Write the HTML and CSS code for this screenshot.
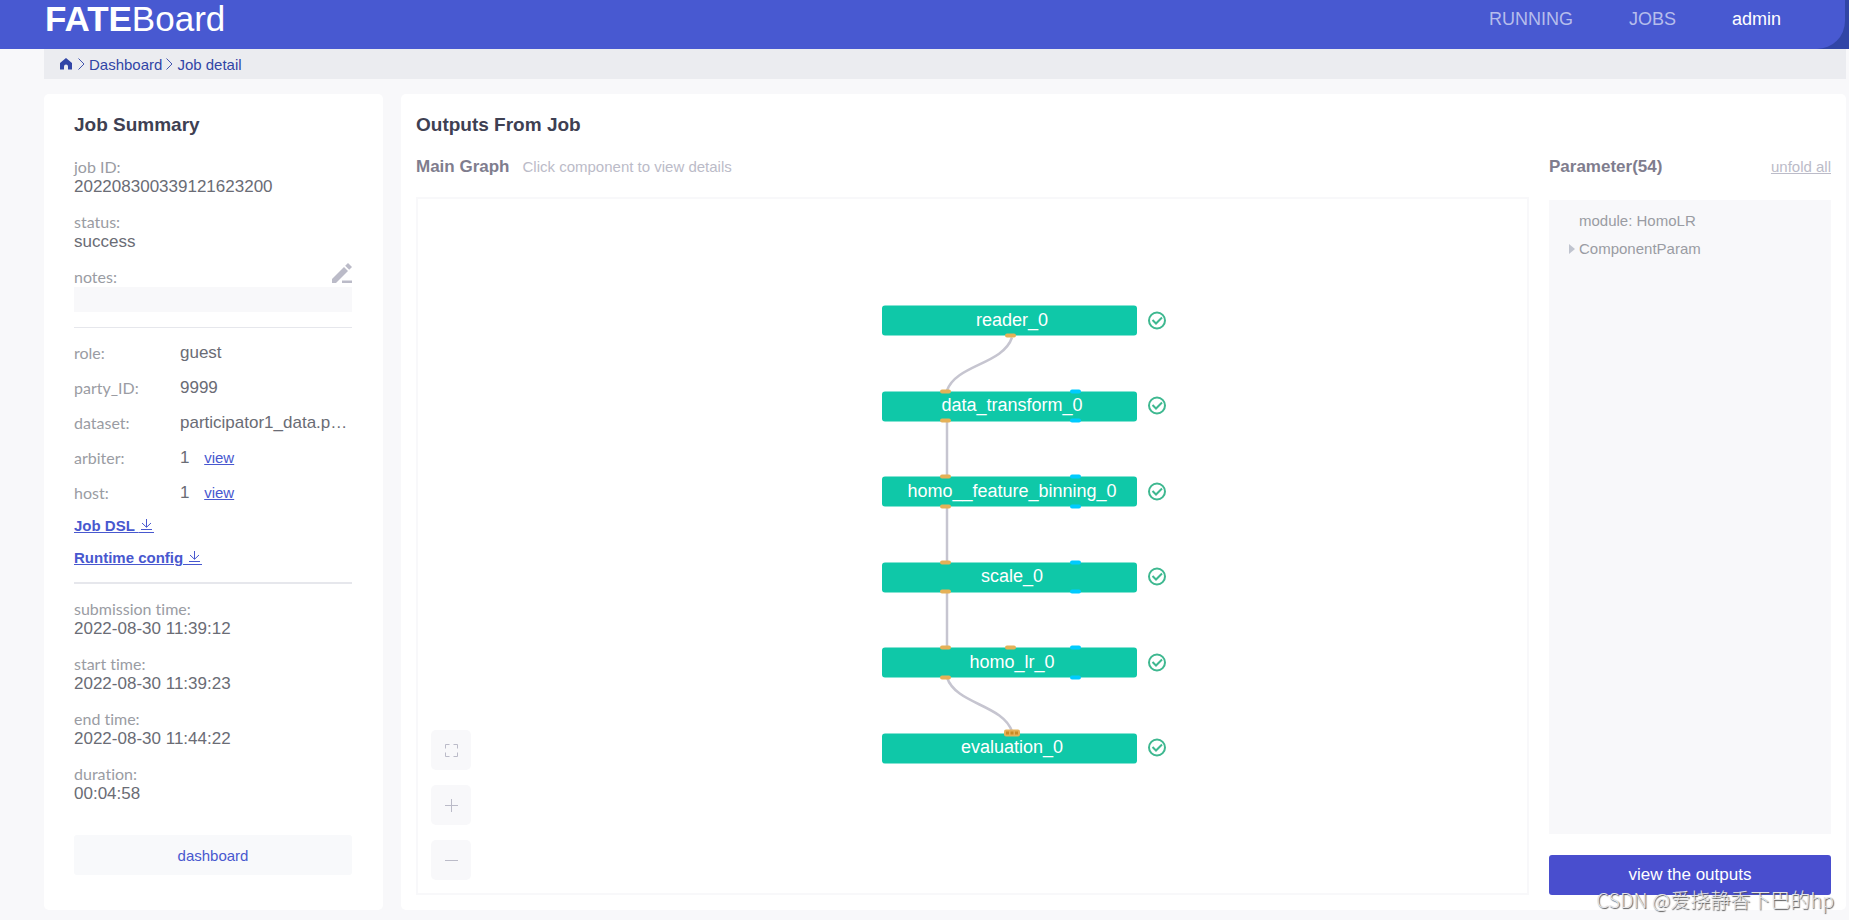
FILE: index.html
```
<!doctype html>
<html lang="en">
  <head>
    <meta charset="utf-8" />
    <title>FATEBoard</title>
    <meta name="viewport" content="width=device-width, initial-scale=1.0" />
    <link rel="stylesheet" href="styles.css" />
  </head>
  <body>
    <header class="header">
      <div class="header-inner">
        <div class="logo"><b>FATE</b>Board</div>
        <nav class="nav">
          <a href="#running">RUNNING</a>
          <a href="#jobs">JOBS</a>
          <a href="#admin" class="user">admin</a>
        </nav>
      </div>
    </header>

    <div class="page">
      <nav class="breadcrumb">
        <a href="#home" class="home" aria-label="Home">
          <svg width="12" height="12" viewBox="0 0 12 12">
            <path d="M6 0 L12 5 V11.5 H8 V8.5 A2 2 0 0 0 4 8.5 V11.5 H0 V5 Z" fill="#3145a6" />
          </svg>
        </a>
        <svg class="sep" width="7" height="12" viewBox="0 0 7 12">
          <path d="M0.5 0.5 L6 6 L0.5 11.5" fill="none" stroke="#3145a6" stroke-width="0.9" />
        </svg>
        <a href="#dashboard">Dashboard</a>
        <svg class="sep" width="7" height="12" viewBox="0 0 7 12">
          <path d="M0.5 0.5 L6 6 L0.5 11.5" fill="none" stroke="#3145a6" stroke-width="0.9" />
        </svg>
        <a href="#detail">Job detail</a>
      </nav>

      <div class="content">
        <aside class="panel summary">
          <h2>Job Summary</h2>
          <dl class="field">
            <dt>job ID:</dt>
            <dd>202208300339121623200</dd>
          </dl>
          <dl class="field">
            <dt>status:</dt>
            <dd>success</dd>
          </dl>
          <div class="notes-head">
            <label for="notes">notes:</label>
            <button class="edit" aria-label="Edit notes">
              <svg width="20" height="20" viewBox="0 0 20 20" fill="#bbbbc8">
                <path d="M0 20 V16 L12 4 L16 8 L4 20 Z" />
                <path d="M13.2 2.8 L16 0 L20 4 L17.2 6.8 Z" />
                <path d="M10 17.5 H20 V20 H10 Z" />
              </svg>
            </button>
          </div>
          <input class="notes" id="notes" type="text" readonly />

          <hr />

          <dl class="row">
            <dt>role:</dt>
            <dd>guest</dd>
          </dl>
          <dl class="row">
            <dt>party_ID:</dt>
            <dd>9999</dd>
          </dl>
          <dl class="row">
            <dt>dataset:</dt>
            <dd>participator1_data.p…</dd>
          </dl>
          <dl class="row">
            <dt>arbiter:</dt>
            <dd>1 <a href="#arbiter">view</a></dd>
          </dl>
          <dl class="row">
            <dt>host:</dt>
            <dd>1 <a href="#host">view</a></dd>
          </dl>
          <a class="download" href="#dsl">Job DSL
            <svg width="15" height="14" viewBox="0 0 15 14" fill="none" stroke="#4858cf">
              <path d="M7.5 0 V8 M3 4 L7.5 8.3 L12 4 M2 10.5 H13 M0 13.5 H15" />
            </svg></a>
          <a class="download" href="#config">Runtime config
            <svg width="15" height="14" viewBox="0 0 15 14" fill="none" stroke="#4858cf">
              <path d="M7.5 0 V8 M3 4 L7.5 8.3 L12 4 M2 10.5 H13 M0 13.5 H15" />
            </svg></a>

          <hr class="thick" />

          <dl class="field">
            <dt>submission time:</dt>
            <dd>2022-08-30 11:39:12</dd>
          </dl>
          <dl class="field">
            <dt>start time:</dt>
            <dd>2022-08-30 11:39:23</dd>
          </dl>
          <dl class="field">
            <dt>end time:</dt>
            <dd>2022-08-30 11:44:22</dd>
          </dl>
          <dl class="field">
            <dt>duration:</dt>
            <dd>00:04:58</dd>
          </dl>
          <button class="btn-dashboard">dashboard</button>
        </aside>

        <main class="panel outputs">
          <h2>Outputs From Job</h2>
          <div class="columns">
            <section class="graph-col">
              <div class="sub">
                <h3>Main Graph</h3>
                <span class="hint">Click component to view details</span>
              </div>
              <div class="graph">
                <svg class="dag" viewBox="0 0 1109 693">
                  <defs>
                    <rect id="box" width="255" height="30" rx="3" />
                    <rect id="port" width="11" height="4" rx="2" />
                    <g id="ok" fill="none" stroke="#3eb890" stroke-width="2">
                      <circle r="8" />
                      <path d="M-4.5 -0.5 L-1 3 L5 -3" />
                    </g>
                  </defs>

                  <g class="links">
                    <path d="M594 138 C585 165 538 165 529 191" />
                    <path d="M529 222 V277" />
                    <path d="M529 307 V363" />
                    <path d="M529 393 V448" />
                    <path d="M529 478 C538 505 585 505 594 532" />
                  </g>

                  <g class="boxes">
                    <use href="#box" x="464" y="106" />
                    <use href="#box" x="464" y="192" />
                    <use href="#box" x="464" y="277" />
                    <use href="#box" x="464" y="363" />
                    <use href="#box" x="464" y="448" />
                    <use href="#box" x="464" y="534" />
                  </g>

                  <g class="names">
                    <text x="594" y="126">reader_0</text>
                    <text x="594" y="211">data_transform_0</text>
                    <text x="594" y="297">homo__feature_binning_0</text>
                    <text x="594" y="382">scale_0</text>
                    <text x="594" y="468">homo_lr_0</text>
                    <text x="594" y="553">evaluation_0</text>
                  </g>

                  <g class="ports-data">
                    <use href="#port" x="587" y="134" />
                    <use href="#port" x="522" y="190" />
                    <use href="#port" x="522" y="219" />
                    <use href="#port" x="522" y="275" />
                    <use href="#port" x="522" y="305" />
                    <use href="#port" x="522" y="361" />
                    <use href="#port" x="522" y="390" />
                    <use href="#port" x="522" y="446" />
                    <use href="#port" x="587" y="446" />
                    <use href="#port" x="522" y="476" />
                    <rect x="586" y="530" width="16" height="7" rx="2" />
                  </g>
                  <path d="M588 533.5 h3 m1.5 0 h3 m1.5 0 h3" stroke="#c98a25" stroke-width="3" />

                  <g class="ports-model">
                    <use href="#port" x="652" y="190" />
                    <use href="#port" x="652" y="219" />
                    <use href="#port" x="652" y="275" />
                    <use href="#port" x="652" y="305" />
                    <use href="#port" x="652" y="361" />
                    <use href="#port" x="652" y="390" />
                    <use href="#port" x="652" y="446" />
                    <use href="#port" x="652" y="476" />
                  </g>

                  <use href="#ok" x="739" y="121" />
                  <use href="#ok" x="739" y="206" />
                  <use href="#ok" x="739" y="292" />
                  <use href="#ok" x="739" y="377" />
                  <use href="#ok" x="739" y="463" />
                  <use href="#ok" x="739" y="548" />
                </svg>
                <div class="tools">
                  <button aria-label="Fit to screen">
                    <svg width="13" height="13" viewBox="0 0 13 13">
                      <path d="M0.5 4.5 V0.5 H4.5 M8.5 0.5 H12.5 V4.5 M12.5 8.5 V12.5 H8.5 M4.5 12.5 H0.5 V8.5" />
                    </svg>
                  </button>
                  <button aria-label="Zoom in">
                    <svg width="13" height="13" viewBox="0 0 13 13">
                      <path d="M6.5 0 V13 M0 6.5 H13" />
                    </svg>
                  </button>
                  <button aria-label="Zoom out">
                    <svg width="13" height="13" viewBox="0 0 13 13">
                      <path d="M0 6.5 H13" />
                    </svg>
                  </button>
                </div>
              </div>
            </section>

            <section class="param-col">
              <div class="sub">
                <h3>Parameter(54)</h3>
                <a href="#unfold" class="unfold">unfold all</a>
              </div>
              <ul class="params">
                <li>module: HomoLR</li>
                <li class="folded">ComponentParam</li>
              </ul>
              <button class="btn-outputs">view the outputs</button>
            </section>
          </div>
        </main>
      </div>
    </div>

    <div class="watermark">CSDN @爱挠静香下巴的hp</div>
  </body>
</html>
```
FILE: styles.css
```
*,
*::before {
  box-sizing: border-box;
}
body {
  margin: 0;
  min-height: 100vh;
  display: flex;
  flex-direction: column;
  background: #f8f8fa;
  color: #6a6c75;
  font-family: "Liberation Sans", Arial, sans-serif;
  font-size: 17px;
  line-height: 19px;
}
h2,
h3,
dl,
dd,
ul {
  margin: 0;
  padding: 0;
}
button {
  border: none;
  padding: 0;
  font-family: inherit;
  cursor: pointer;
}

/* header */
.header {
  background: #3145a6;
}
.header-inner {
  display: flex;
  justify-content: space-between;
  align-items: flex-start;
  height: 49px;
  margin-right: 4px;
  padding: 0 64px 0 45px;
  background: #4859d1;
  border-radius: 0 0 28px 0;
}
.logo {
  color: #fff;
  font-size: 35px;
  line-height: 38px;
}
.nav {
  display: flex;
  gap: 56px;
  padding-top: 10px;
}
.nav a {
  color: #b6bdec;
  font-size: 18px;
  text-decoration: none;
}
.nav .user {
  color: #fff;
}

/* page */
.page {
  flex: 1;
  display: flex;
  flex-direction: column;
  padding: 0 3px 11px 44px;
}
.breadcrumb {
  display: flex;
  align-items: center;
  gap: 4px;
  height: 30px;
  padding-left: 16px;
  background: #ebecf0;
  font-size: 15px;
}
.breadcrumb a {
  color: #3145a6;
  text-decoration: none;
}
.breadcrumb .home {
  margin-right: 2px;
}
.breadcrumb svg {
  display: block;
}
.content {
  flex: 1;
  display: flex;
  gap: 18px;
  margin-top: 15px;
}
.panel {
  background: #fff;
  border-radius: 5px;
}
h2 {
  color: #3e4052;
  font-size: 19px;
  line-height: 22px;
}

/* job summary */
.summary {
  flex: 0 0 339px;
  min-width: 0;
  padding: 20px 31px 35px 30px;
}
.summary h2 {
  margin-bottom: 21px;
}
.summary dt,
.summary label {
  color: #9a9ca3;
  font-family: Lato, sans-serif;
  font-size: 16px;
  font-variant-ligatures: none;
}
.field {
  margin-bottom: 15px;
}
.field dd {
  line-height: 21px;
}
.notes-head {
  display: flex;
  justify-content: space-between;
  height: 20px;
}
.edit {
  height: 20px;
  margin-top: -4px;
  background: none;
}
.edit svg {
  display: block;
}
.notes {
  display: block;
  width: 100%;
  height: 25px;
  border: none;
  background: #f8f8fa;
}
hr {
  height: 1px;
  margin: 15px 0 7px;
  border: none;
  background: #e6e7ec;
}
.thick {
  height: 2px;
  margin: 8px 0 15px;
}
.row {
  display: flex;
  line-height: 35px;
}
.row dt {
  flex: 0 0 106px;
}
.row dd {
  white-space: nowrap;
}
.row a {
  margin-left: 10px;
  color: #4858cf;
  font-size: 15px;
}
.download {
  display: block;
  color: #4858cf;
  font-size: 15px;
  font-weight: bold;
  line-height: 32px;
}
.download svg {
  vertical-align: -2px;
}
.btn-dashboard {
  width: 100%;
  height: 40px;
  margin-top: 16px;
  background: #f8f9fb;
  border-radius: 3px;
  color: #4858cf;
  font-size: 15px;
}

/* outputs */
.outputs {
  flex: 1;
  display: flex;
  flex-direction: column;
  min-width: 0;
  padding: 20px 15px 15px;
}
.columns {
  flex: 1;
  display: flex;
  gap: 20px;
  margin-top: 21px;
}
.graph-col {
  flex: 1;
  display: flex;
  flex-direction: column;
  min-width: 0;
}
.param-col {
  flex: 0 0 282px;
  display: flex;
  flex-direction: column;
}
.sub {
  display: flex;
  align-items: baseline;
  height: 40px;
}
h3 {
  color: #7f7d8e;
  font-size: 17px;
  line-height: 20px;
}
.hint {
  margin-left: 13px;
  color: #bbbbc8;
  font-size: 15px;
}
.graph {
  position: relative;
  flex: 1;
  border: 2px solid #f8f8fa;
}
.dag {
  display: block;
  width: 100%;
  height: 100%;
}
.links path {
  fill: none;
  stroke: #c6c5d0;
  stroke-width: 2.5;
}
.boxes {
  fill: #0fc8a8;
}
.names {
  fill: #fff;
  font-size: 18px;
  text-anchor: middle;
}
.ports-data {
  fill: #e5b157;
}
.ports-model {
  fill: #00cbff;
}
.tools {
  position: absolute;
  left: 13px;
  bottom: 13px;
  display: flex;
  flex-direction: column;
  gap: 15px;
}
.tools button {
  display: flex;
  align-items: center;
  justify-content: center;
  width: 40px;
  height: 40px;
  background: #f8f8fa;
  border-radius: 5px;
}
.tools path {
  fill: none;
  stroke: #bbbbc8;
}
.unfold {
  margin-left: auto;
  color: #bbbbc8;
  font-size: 15px;
}
.params {
  flex: 1;
  margin-top: 3px;
  padding: 7px 20px;
  background: #f8f8fa;
  color: #9a9ca3;
  font-size: 15px;
  line-height: 28px;
  list-style: none;
}
.params li {
  display: flex;
  align-items: center;
}
.params li::before {
  content: "";
  width: 6px;
  margin-right: 4px;
}
.params .folded::before {
  border: solid transparent;
  border-width: 5px 0 5px 6px;
  border-left-color: #c0c4cf;
}
.btn-outputs {
  height: 40px;
  margin-top: 21px;
  background: #494ece;
  border-radius: 3px;
  color: #fff;
  font-size: 17px;
}

.watermark {
  position: absolute;
  right: 15px;
  bottom: 5px;
  color: #e4e4e6;
  font-family: "Noto Sans CJK SC", sans-serif;
  font-size: 20px;
  font-weight: 300;
  line-height: 30px;
  text-shadow: 1px 1px 1px #555;
}
```
